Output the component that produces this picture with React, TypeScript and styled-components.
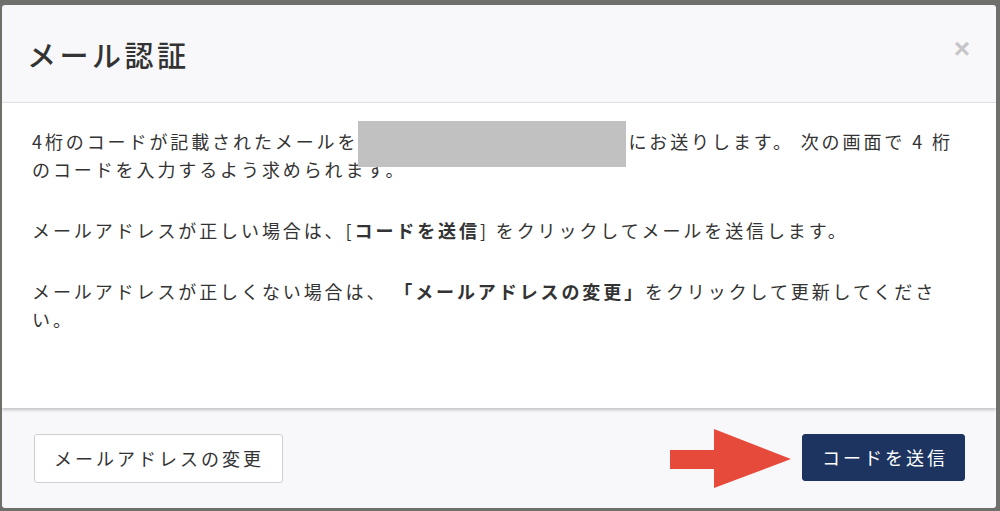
import React from 'react';
import styled, { createGlobalStyle } from 'styled-components';

const GlobalStyle = createGlobalStyle`
  html, body {
    margin: 0;
    padding: 0;
    background: #6f6f6c;
  }
  body {
    font-family: "Noto Sans CJK JP", "Noto Sans", sans-serif;
    color: #333;
  }
`;

const Backdrop = styled.div`
  width: 1000px;
  height: 511px;
  box-sizing: border-box;
  padding: 5px 4px 3px 2px;
  display: flex;
`;

const Modal = styled.div`
  flex: 1;
  display: flex;
  flex-direction: column;
  background: #f8f8fa;
  border-radius: 3px;
  overflow: hidden;
`;

const Header = styled.div`
  height: 97px;
  flex-shrink: 0;
  display: flex;
  align-items: center;
  justify-content: space-between;
  padding: 0 26px 0 25px;
  border-bottom: 1px solid #e2e2e5;
`;

const Title = styled.h1`
  margin: 0;
  font-size: 29px;
  font-weight: 500;
  letter-spacing: 3.5px;
  color: #333;
`;

const Close = styled.button`
  border: none;
  background: none;
  padding: 0;
  margin-top: -10px;
  font-family: "Liberation Sans", Arial, sans-serif;
  font-size: 28px;
  font-weight: 700;
  line-height: 1;
  color: #c6c6c8;
  cursor: pointer;
`;

const Body = styled.div`
  flex: 1;
  background: #fff;
  padding: 24px 32px 0 30px;
  box-shadow: 0 2px 3px rgba(0, 0, 0, 0.22);
  position: relative;
  z-index: 1;
`;

const Paragraph = styled.p`
  margin: 0 0 33px;
  font-size: 18px;
  line-height: 28px;
  letter-spacing: 2.9px;
  color: #333;
`;

const Strong = styled.b`
  font-weight: 700;
`;

const Redacted = styled.span`
  display: inline-block;
  width: 270px;
  position: relative;

  &::after {
    content: "";
    position: absolute;
    left: 0;
    top: -6px;
    width: 268px;
    height: 46px;
    background: #c1c1c1;
  }
`;

const Footer = styled.div`
  height: 100px;
  flex-shrink: 0;
  display: flex;
  align-items: center;
  justify-content: space-between;
  padding: 0 31px 0 32px;
`;

const Actions = styled.div`
  display: flex;
  align-items: center;
  gap: 11px;
`;

const Button = styled.button<{ $primary?: boolean }>`
  font-family: "Noto Sans CJK JP", "Noto Sans", sans-serif;
  font-size: 18px;
  letter-spacing: 3px;
  border-radius: 3px;
  cursor: pointer;
  box-sizing: border-box;
  height: ${(p) => (p.$primary ? '47px' : '49px')};
  padding: ${(p) => (p.$primary ? '0 16px 0 19px' : '0 18px 0 19px')};
  margin-top: ${(p) => (p.$primary ? '-2px' : '0')};
  color: ${(p) => (p.$primary ? '#fff' : '#333')};
  background: ${(p) => (p.$primary ? '#1d3461' : '#fff')};
  border: 1px solid ${(p) => (p.$primary ? '#1d3461' : '#cfcfd2')};
`;

const Arrow = () => (
  <svg width="121" height="59" viewBox="0 0 121 59">
    <polygon points="0,21 44,21 44,0 121,30 44,59 44,40 0,40" fill="#e64a3b" />
  </svg>
);

export default function App() {
  return (
    <>
      <GlobalStyle />
      <Backdrop>
        <Modal>
          <Header>
            <Title>メール認証</Title>
            <Close aria-label="閉じる">×</Close>
          </Header>
          <Body>
            <Paragraph>
              4桁のコードが記載されたメールを<Redacted aria-label="メールアドレス">&nbsp;</Redacted>にお送りします。 次の画面で 4 桁のコードを入力するよう求められます。
            </Paragraph>
            <Paragraph>
              メールアドレスが正しい場合は、[<Strong>コードを送信</Strong>] をクリックしてメールを送信します。
            </Paragraph>
            <Paragraph>
              メールアドレスが正しくない場合は、 <Strong>「メールアドレスの変更」</Strong>をクリックして更新してください。
            </Paragraph>
          </Body>
          <Footer>
            <Button>メールアドレスの変更</Button>
            <Actions>
              <Arrow />
              <Button $primary>コードを送信</Button>
            </Actions>
          </Footer>
        </Modal>
      </Backdrop>
    </>
  );
}
